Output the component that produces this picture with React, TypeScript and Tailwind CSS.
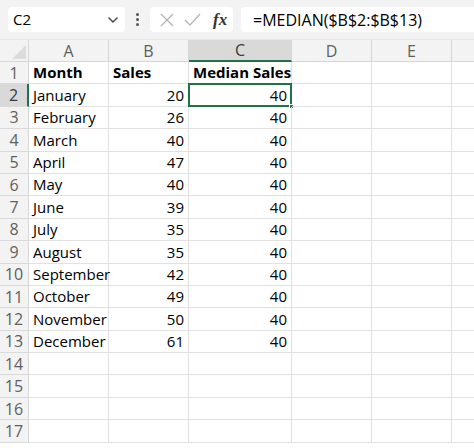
import React from "react";

const rows: [string, string, string][] = [
  ["January", "20", "40"],
  ["February", "26", "40"],
  ["March", "40", "40"],
  ["April", "47", "40"],
  ["May", "40", "40"],
  ["June", "39", "40"],
  ["July", "35", "40"],
  ["August", "35", "40"],
  ["September", "42", "40"],
  ["October", "49", "40"],
  ["November", "50", "40"],
  ["December", "61", "40"],
];

const cols = [
  { name: "A", w: "w-[80px]" },
  { name: "B", w: "w-[80px]" },
  { name: "C", w: "w-[103px]" },
  { name: "D", w: "w-[80px]" },
  { name: "E", w: "w-[80px]" },
  { name: "", w: "w-[40px]" },
];

function Cell({ w, children, right, bold, selected }: { w: string; children?: React.ReactNode; right?: boolean; bold?: boolean; selected?: boolean }) {
  return (
    <div
      className={`${w} shrink-0 h-full border-r border-b border-[#e1e1e1] flex items-center px-[4px] relative whitespace-nowrap ${right ? "justify-end" : ""} ${bold ? "font-bold" : ""}`}
    >
      {children}
      {selected && (
        <>
          <div className="absolute -left-px -top-px right-[-1px] bottom-[-1px] border-2 border-[#217346]" />
          <div className="absolute right-[-3px] bottom-[-3px] w-[5px] h-[5px] bg-[#217346] border border-white" />
        </>
      )}
    </div>
  );
}

export default function App() {
  const total = 17;
  return (
    <div className="w-[474px] h-[448px] overflow-hidden bg-white text-[15px] text-black" style={{ fontFamily: '"Open Sans", "Noto Sans", sans-serif' }}>
      {/* formula bar */}
      <div className="h-[40px] bg-[#f3f3f3] flex items-center pl-[8px] gap-0 border-b border-[#e6e6e6]">
        <div className="w-[117px] h-[25px] bg-white rounded-[4px] flex items-center justify-between pl-[5px] pr-[6px] text-[15px]">
          <span>C2</span>
          <svg width="12" height="8" viewBox="0 0 12 8" fill="none" stroke="#444" strokeWidth="1.4"><path d="M1.5 1.5 L6 6 L10.5 1.5" /></svg>
        </div>
        <div className="w-[25px] flex flex-col items-center gap-[2px]">
          <span className="w-[3px] h-[3px] rounded-full bg-[#555]" />
          <span className="w-[3px] h-[3px] rounded-full bg-[#555]" />
          <span className="w-[3px] h-[3px] rounded-full bg-[#555]" />
        </div>
        <div className="w-[83px] h-[25px] bg-white rounded-[4px] flex items-center pl-[10px]">
          <svg width="14" height="14" viewBox="0 0 14 14" stroke="#b5b5b5" strokeWidth="1.3"><path d="M1 1 L13 13 M13 1 L1 13" /></svg>
          <svg className="ml-[10px]" width="17" height="13" viewBox="0 0 17 13" fill="none" stroke="#b5b5b5" strokeWidth="1.3"><path d="M1 7 L6 12 L16 1" /></svg>
          <span className="ml-[12px] italic font-bold text-[17px] text-[#333] leading-none" style={{ fontFamily: '"Liberation Serif", serif' }}>fx</span>
        </div>
        <div className="ml-[8px] flex-1 h-[25px] bg-white rounded-l-[4px] flex items-center pl-[12px] text-[16px]">
          =MEDIAN($B$2:$B$13)
        </div>
      </div>

      {/* column headers */}
      <div className="flex h-[22px] bg-[#f3f3f3] text-[#5f5f5f] text-[16px]">
        <div className="w-[29px] shrink-0 h-full border-r border-b border-[#d6d6d6] relative overflow-hidden">
          <svg className="absolute right-[2px] bottom-[2px]" width="14" height="14" viewBox="0 0 14 14"><path d="M14 0 L14 14 L0 14 Z" fill="#dcdcdc" /></svg>
        </div>
        {cols.map((c) => (
          <div
            key={c.name}
            className={`${c.w} shrink-0 h-full flex items-center justify-center border-r border-[#d6d6d6] ${c.name === "C" ? "bg-[#d9d9d9] border-b-2 border-b-[#217346] text-[#3a3a3a]" : "border-b border-b-[#d6d6d6]"}`}
          >
            {c.name}
          </div>
        ))}
      </div>

      {/* rows */}
      {Array.from({ length: total }, (_, i) => {
        const r = i + 1;
        const data = r === 1 ? ["Month", "Sales", "Median Sales"] : rows[r - 2];
        return (
          <div key={r} className="flex h-[22.4px]">
            <div
              className={`w-[29px] shrink-0 h-full flex items-center justify-center text-[16px] border-b border-[#dadada] ${r === 2 ? "bg-[#d9d9d9] border-r-2 border-r-[#217346] text-[#3a3a3a]" : "bg-[#f3f3f3] border-r border-r-[#d6d6d6] text-[#5f5f5f]"}`}
            >
              {r}
            </div>
            <Cell w={cols[0].w} bold={r === 1}>{data?.[0]}</Cell>
            <Cell w={cols[1].w} bold={r === 1} right={r !== 1}>{data?.[1]}</Cell>
            <Cell w={cols[2].w} bold={r === 1} right={r !== 1} selected={r === 2}>{data?.[2]}</Cell>
            <Cell w={cols[3].w} />
            <Cell w={cols[4].w} />
            <Cell w={cols[5].w} />
          </div>
        );
      })}
    </div>
  );
}
